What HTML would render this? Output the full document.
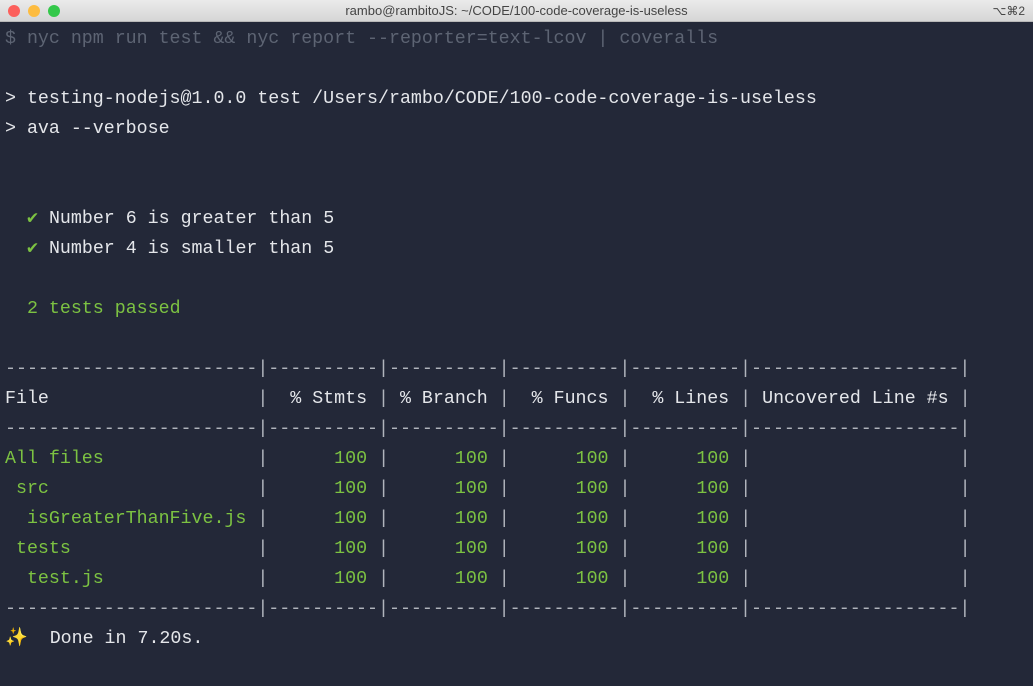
<!DOCTYPE html>
<html><head><style>
html,body{margin:0;padding:0;width:1033px;height:686px;overflow:hidden;background:#232838;}
.tb{position:absolute;top:0;left:0;width:1033px;height:22px;background:linear-gradient(#ebebeb,#d6d6d6);border-bottom:1px solid #b8b8b8;box-sizing:border-box;font-family:"Liberation Sans",sans-serif;font-size:13px;color:#444;text-align:center;line-height:22px;}
.dot{position:absolute;top:5px;width:12px;height:12px;border-radius:50%;}
.k{position:absolute;right:8px;top:0;font-size:12px;}
pre{position:absolute;top:24px;left:5px;margin:0;font-family:"Liberation Mono",monospace;font-size:18.3px;line-height:30px;color:#e4e6ea;}
.g{color:#7cc242}.d{color:#5d6473}.b{color:#b0b4bc}
</style></head><body>
<div class="tb"><span class="dot" style="left:8px;background:#fc605c"></span><span class="dot" style="left:28px;background:#fdbc40"></span><span class="dot" style="left:48px;background:#34c84a"></span>rambo@rambitoJS: ~/CODE/100-code-coverage-is-useless<span class="k">⌥⌘2</span></div>
<pre><span class="d">$ nyc npm run test &amp;&amp; nyc report --reporter=text-lcov | coveralls</span>

&gt; testing-nodejs@1.0.0 test /Users/rambo/CODE/100-code-coverage-is-useless
&gt; ava --verbose


  <span class="g">✔</span> Number 6 is greater than 5
  <span class="g">✔</span> Number 4 is smaller than 5

  <span class="g">2 tests passed</span>

<span class="b">-----------------------|----------|----------|----------|----------|-------------------|</span>
File                   <span class="b">|</span>  % Stmts <span class="b">|</span> % Branch <span class="b">|</span>  % Funcs <span class="b">|</span>  % Lines <span class="b">|</span> Uncovered Line #s <span class="b">|</span>
<span class="b">-----------------------|----------|----------|----------|----------|-------------------|</span>
<span class="g">All files</span>              <span class="b">|</span>      <span class="g">100</span> <span class="b">|</span>      <span class="g">100</span> <span class="b">|</span>      <span class="g">100</span> <span class="b">|</span>      <span class="g">100</span> <span class="b">|</span>                   <span class="b">|</span>
<span class="g"> src</span>                   <span class="b">|</span>      <span class="g">100</span> <span class="b">|</span>      <span class="g">100</span> <span class="b">|</span>      <span class="g">100</span> <span class="b">|</span>      <span class="g">100</span> <span class="b">|</span>                   <span class="b">|</span>
<span class="g">  isGreaterThanFive.js</span> <span class="b">|</span>      <span class="g">100</span> <span class="b">|</span>      <span class="g">100</span> <span class="b">|</span>      <span class="g">100</span> <span class="b">|</span>      <span class="g">100</span> <span class="b">|</span>                   <span class="b">|</span>
<span class="g"> tests</span>                 <span class="b">|</span>      <span class="g">100</span> <span class="b">|</span>      <span class="g">100</span> <span class="b">|</span>      <span class="g">100</span> <span class="b">|</span>      <span class="g">100</span> <span class="b">|</span>                   <span class="b">|</span>
<span class="g">  test.js</span>              <span class="b">|</span>      <span class="g">100</span> <span class="b">|</span>      <span class="g">100</span> <span class="b">|</span>      <span class="g">100</span> <span class="b">|</span>      <span class="g">100</span> <span class="b">|</span>                   <span class="b">|</span>
<span class="b">-----------------------|----------|----------|----------|----------|-------------------|</span>
<span style="color:#f5c542">✨</span>  Done in 7.20s.
</pre>
</body></html>
